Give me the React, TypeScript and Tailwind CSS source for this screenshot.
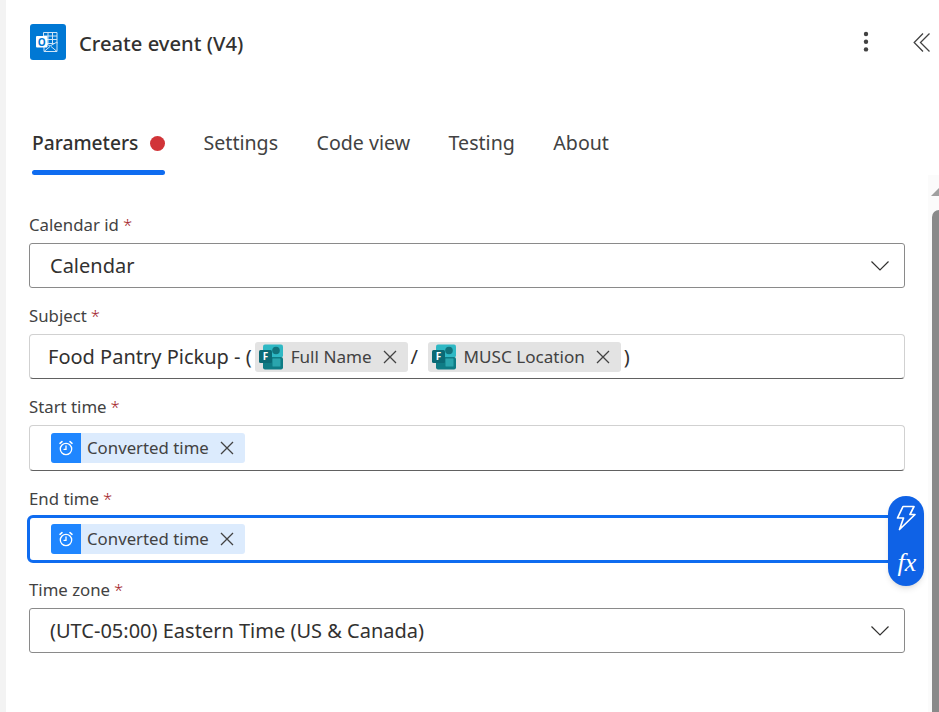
const FormsIcon = () => (
  <svg width="26" height="26" viewBox="0 0 26 26" className="shrink-0">
    <rect x="5" y="0.500" width="20" height="13" rx="2" fill="#2fb8c4" />
    <circle cx="18" cy="6.500" r="3.800" fill="#12737c" />
    <rect x="5" y="13" width="20" height="12.500" rx="2" fill="#0f7c85" />
    <rect x="14.500" y="14.500" width="8" height="8" rx="0.500" fill="#2aa5ad" />
    <rect x="1" y="6" width="13" height="13" rx="1.500" fill="#0b6a75" />
    <text x="7.500" y="16" textAnchor="middle" fontSize="10" fontWeight="700" fill="#fff" fontFamily="Open Sans, sans-serif">F</text>
  </svg>
);

const OutlookIcon = () => (
  <svg width="36" height="36" viewBox="0 0 36 36">
    <rect width="36" height="36" rx="3" fill="#0078d4" />
    <g fill="none" stroke="#cfe4f6" strokeWidth="1">
      <path d="M13.500 8.500h13.500v11h-13.500zM18 8.500v11M22.500 8.500v11M13.500 12h13.500M13.500 15.500h13.500" />
    </g>
    <path d="M14 18.500l6 3.500 7-4v9.500H14z" fill="#0078d4" stroke="#cfe4f6" strokeWidth="1" strokeLinejoin="round" />
    <path d="M14 27.500l6-5M27 27.500l-6-5" stroke="#cfe4f6" strokeWidth="1" />
    <rect x="6" y="12" width="11.500" height="11.500" rx="1" fill="#fff" />
    <text x="11.750" y="21.500" textAnchor="middle" fontSize="10" fontWeight="700" fill="#0078d4" fontFamily="Open Sans, sans-serif">O</text>
  </svg>
);

const ClockIcon = () => (
  <svg width="18" height="18" viewBox="0 0 18 18" fill="none" stroke="#fff" strokeWidth="1.300" strokeLinecap="round">
    <circle cx="9" cy="10" r="5.700" />
    <path d="M9 7v3.300h-2" />
    <path d="M3 4.300l2-1.600M15 4.300l-2-1.600" strokeWidth="1.600" />
  </svg>
);

const CloseIcon = () => (
  <svg width="14" height="14" viewBox="0 0 14 14" fill="none" stroke="#424242" strokeWidth="1.300" className="mx-[11px] shrink-0">
    <path d="M1 1l12 12M13 1L1 13" />
  </svg>
);

const Chevron = () => (
  <svg width="18" height="10" viewBox="0 0 18 10" fill="none" stroke="#323130" strokeWidth="1.200" className="shrink-0">
    <path d="M0.500 0.500L9 9 17.500 0.500" />
  </svg>
);

const Label = ({ text }: { text: string }) => (
  <div className="h-[18px] flex items-center text-[16.800px] leading-[18px] text-[#424242] mb-[9px]">
    {text}
    {/* required marker */}
    <span className="text-[#a4262c] ml-[4px] font-light">*</span>
  </div>
);

const TokenChip = ({ name }: { name: string }) => (
  <span className="inline-flex items-center h-[30px] pl-[3px] bg-[#e3e3e3] rounded-[3px] text-[17.100px] text-[#424242]">
    <FormsIcon />
    <span className="ml-[7px]">{name}</span>
    <CloseIcon />
  </span>
);

const TimeChip = () => (
  <span className="inline-flex items-center h-[30px] bg-[#dcebfd] rounded-[3px] text-[16.800px] text-[#424242] overflow-hidden">
    <span className="w-[30px] h-full bg-[#1f86ff] flex items-center justify-center">
      <ClockIcon />
    </span>
    <span className="ml-[6px]">Converted time</span>
    <CloseIcon />
  </span>
);

const Dropdown = ({ value }: { value: string }) => (
  <div className="h-[45px] border border-[#8a8a8a] rounded-[3px] flex items-center justify-between pl-[20px] pr-[15px] text-[20px] text-[#323130]">
    <span>{value}</span>
    <Chevron />
  </div>
);

const TokenBox = ({ children, h = 'h-[46px]' }: { children: React.ReactNode; h?: string }) => (
  <div className={`${h} border border-[#d1d1d1] border-b-[#616161] rounded-[4px] flex items-center pl-[21px]`}>
    {children}
  </div>
);

export default function App() {
  const tabs = ['Settings', 'Code view', 'Testing', 'About'];

  return (
    <div
      className="relative h-[712px] w-[939px] overflow-hidden bg-white flex"
      style={{ fontFamily: '"Noto Sans", "Open Sans", sans-serif' }}
    >
      <div className="w-[6px] bg-[#f3f3f3] shrink-0" />

      <div className="flex-1 min-w-0">
        {/* header */}
        <div className="h-[36px] mt-[24px] ml-[24px] flex items-center">
          <OutlookIcon />
          <h1 className="ml-[13px] mt-[2px] text-[20.200px] font-medium text-[#323130]">Create event (V4)</h1>
          <div className="ml-auto flex items-center mr-[9px]">
            <svg width="10" height="22" viewBox="0 0 10 22" fill="#424242" className="mr-[42px]">
              <circle cx="5" cy="3" r="2.200" />
              <circle cx="5" cy="10.700" r="2.200" />
              <circle cx="5" cy="18.400" r="2.200" />
            </svg>
            <svg width="17" height="19" viewBox="0 0 17 19" fill="none" stroke="#424242" strokeWidth="1.300">
              <path d="M10 0.500L1.200 9.500 10 18.500M16.500 0.500L7.500 9.500 16.500 18.500" />
            </svg>
          </div>
        </div>

        {/* tabs */}
        <div className="mt-[68px] ml-[26px] flex items-start gap-[38.500px] text-[19.600px] text-[#424242]">
          <div className="flex flex-col w-[133px]">
            <div className="h-[30px] flex items-center justify-between">
              <span className="font-medium text-[19.200px] text-[#323130]">Parameters</span>
              <span className="w-[15px] h-[15px] rounded-full bg-[#d13438]" />
            </div>
            <div className="h-[5px] rounded-full bg-[#0f6cf0] mt-[12px]" />
          </div>
          {tabs.map((tab) => (
            <div key={tab} className="h-[30px] flex items-center">
              {tab}
            </div>
          ))}
        </div>

        {/* form */}
        <div className="mt-[41px] ml-[23px] w-[876px] flex flex-col">
          <Label text="Calendar id" />
          <Dropdown value="Calendar" />

          <div className="mt-[19px]">
            <Label text="Subject" />
            <TokenBox h="h-[45px]">
              <div className="flex items-center text-[20px] text-[#323130] -ml-[3px]">
                <span className="whitespace-pre mr-[3px]">Food Pantry Pickup - (</span>
                <TokenChip name="Full Name" />
                <span className="w-[20px] pl-[3px]">/</span>
                <TokenChip name="MUSC Location" />
                <span className="ml-[3px]">)</span>
              </div>
            </TokenBox>
          </div>

          <div className="mt-[19px]">
            <Label text="Start time" />
            <TokenBox>
              <TimeChip />
            </TokenBox>
          </div>

          <div className="mt-[19px]">
            <Label text="End time" />
            <div className="h-[48px] -mt-[2px] -ml-[2px] border-[3px] border-[#0f6cf0] rounded-[6px] flex items-center pl-[21px]">
              <TimeChip />
            </div>
          </div>

          <div className="mt-[18px]">
            <Label text="Time zone" />
            <Dropdown value="(UTC-05:00) Eastern Time (US & Canada)" />
          </div>
        </div>
      </div>

      {/* scrollbar */}
      <div className="absolute right-0 top-[175px] bottom-0 w-[11px] bg-[#fbfbfb]">
        <div className="absolute right-0 top-[13px] w-0 h-0 border-l-[8px] border-l-transparent border-b-[8px] border-b-[#a0a0a0]" />
        <div className="absolute right-0 top-[35px] bottom-0 w-[7px] rounded-tl-[7px] bg-[#8a8a8a]" />
      </div>

      {/* expression pill */}
      <div className="absolute left-[888px] top-[496px] w-[36px] h-[90px] rounded-full bg-[#0f62e6] shadow-md flex flex-col items-center justify-between pt-[9px] pb-[10px]">
        <svg width="20" height="26" viewBox="0 0 20 26" fill="none" stroke="#fff" strokeWidth="1.700" strokeLinejoin="round">
          <path d="M7 1.500h11l-4 8h5L3.500 24.500 7.500 13H1.500z" />
        </svg>
        <span className="text-white text-[26px] leading-[26px] italic font-medium ml-[2px]" style={{ fontFamily: '"Liberation Serif", serif' }}>
          fx
        </span>
      </div>
    </div>
  );
}
